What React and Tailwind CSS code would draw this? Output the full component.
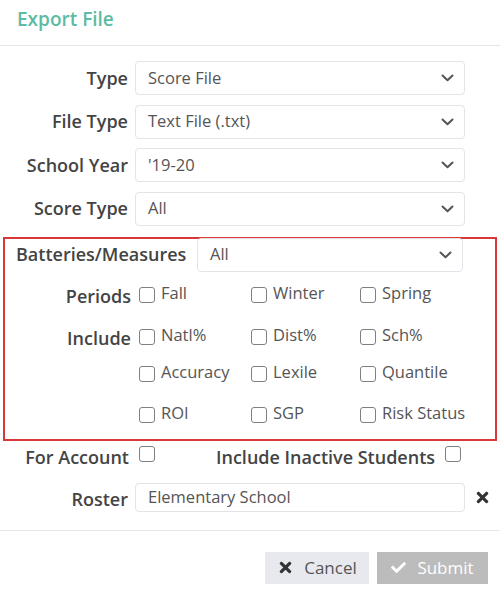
import React from "react";
import { FaTimes, FaCheck } from "react-icons/fa";

const Chevron = () => (
  <svg width="13" height="8" viewBox="0 0 13 8" className="shrink-0">
    <path d="M1.5 1.5 L6.5 6.3 L11.5 1.5" fill="none" stroke="#555" strokeWidth="2" strokeLinecap="round" strokeLinejoin="round" />
  </svg>
);

const Select = ({ value, className = "" }) => (
  <div className={`flex items-center justify-between h-[34px] border border-[#e3e4ea] rounded-[4px] bg-white pl-[12px] pr-[10px] text-[16.5px] text-[#555] ${className}`}>
    <span>{value}</span>
    <Chevron />
  </div>
);

const Box = () => (
  <span className="inline-block w-[16px] h-[16px] border-[1.5px] border-[#808080] rounded-[3px] bg-white shrink-0" />
);

const Check = ({ label }) => (
  <div className="flex items-center">
    <Box />
    <span className="ml-[6px] text-[16.5px] text-[#555] leading-none -mt-[3px] whitespace-nowrap">{label}</span>
  </div>
);

const Row = ({ label, value }) => (
  <div className="flex items-center h-[34px]">
    <div className="w-[128px] text-right text-[18px] font-semibold text-[#444]">{label}</div>
    <Select value={value} className="ml-[7px] w-[330px]" />
  </div>
);

export default function App() {
  return (
    <div className="w-[500px] h-[604px] bg-white" style={{ fontFamily: '"Open Sans", sans-serif' }}>
      <div className="h-[46px] border-b border-[#e5e5e5] px-[17px] flex items-center">
        <span className="text-[19px] font-semibold text-[#5dbba3] -mt-[6px]">Export File</span>
      </div>
      <div className="pt-[15px] flex flex-col gap-[9.5px]">
        <Row label="Type" value="Score File" />
        <Row label="File Type" value="Text File (.txt)" />
        <Row label="School Year" value="'19-20" />
        <Row label="Score Type" value="All" />
      </div>
      <div className="mt-[11px] mx-[3px] border-2 border-[#d9383a] h-[204px]">
        <div className="flex items-center h-[32px]">
          <div className="w-[184px] pl-[11px] text-[18px] font-semibold text-[#444] whitespace-nowrap">Batteries/Measures</div>
          <Select value="All" className="ml-[8px] w-[266px] h-[32px]" />
        </div>
        <div className="flex mt-[15px]">
          <div className="w-[126px] text-right text-[18px] font-semibold text-[#444] leading-[20px]">Periods</div>
          <div className="ml-[8px] grid grid-cols-[112px_109px_auto] items-center h-[16px] mt-[1px]">
            <Check label="Fall" />
            <Check label="Winter" />
            <Check label="Spring" />
          </div>
        </div>
        <div className="flex mt-[22px]">
          <div className="w-[126px] text-right text-[18px] font-semibold text-[#444] leading-[20px]">Include</div>
          <div className="ml-[8px] grid grid-cols-[112px_109px_auto] gap-y-[21px] mt-[1px]">
            <Check label="Natl%" />
            <Check label="Dist%" />
            <Check label="Sch%" />
            <Check label="Accuracy" />
            <Check label="Lexile" />
            <Check label="Quantile" />
            <div className="mt-[4px]"><Check label="ROI" /></div>
            <div className="mt-[4px]"><Check label="SGP" /></div>
            <div className="mt-[4px]"><Check label="Risk Status" /></div>
          </div>
        </div>
      </div>
      <div className="flex items-center mt-[6px] h-[22px]">
        <div className="w-[129px] text-right text-[18px] font-semibold text-[#444] whitespace-nowrap">For Account</div>
        <div className="ml-[10px] -mt-[4px]"><Box /></div>
        <div className="ml-[61px] text-[18px] font-semibold text-[#444] whitespace-nowrap">Include Inactive Students</div>
        <div className="ml-[10px] -mt-[4px]"><Box /></div>
      </div>
      <div className="flex items-center mt-[14px] h-[29px]">
        <div className="w-[128px] text-right text-[18px] font-semibold text-[#444] mt-[4px]">Roster</div>
        <div className="ml-[7px] w-[330px] h-[29px] border border-[#e3e4ea] rounded-[4px] flex items-center pl-[12px] text-[16.5px] text-[#555]">Elementary School</div>
        <FaTimes size={17} className="ml-[9px] text-[#333]" />
      </div>
      <div className="mt-[18px] border-t border-[#e8e8e8] flex justify-end gap-[8px] pt-[21px] pr-[12px]">
        <div className="w-[104px] h-[32px] bg-[#e8e9ee] flex items-center justify-center text-[17px] text-[#555]">
          <FaTimes size={17} className="text-[#333] mr-[10px]" />
          Cancel
        </div>
        <div className="w-[111px] h-[32px] bg-[#bcbcbc] flex items-center justify-center text-[17px] text-white">
          <FaCheck size={15} className="mr-[11px]" />
          Submit
        </div>
      </div>
    </div>
  );
}
